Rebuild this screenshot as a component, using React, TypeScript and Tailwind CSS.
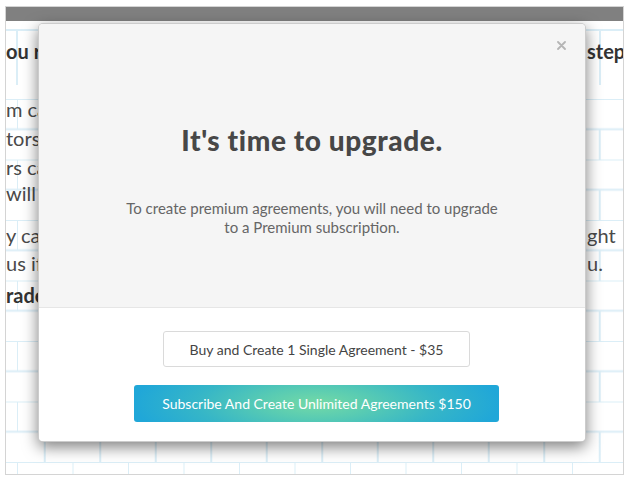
import React from "react";

const rows: { left: string; right?: string; bold?: boolean; mt: number }[] = [
  { left: "ou require", right: "step", bold: true, mt: 16 },
  { left: "m can be", mt: 30 },
  { left: "tors and", mt: 1 },
  { left: "rs can", mt: 1 },
  { left: "will be", mt: -2 },
  { left: "y can", right: "ght", mt: 14 },
  { left: "us if", right: "u.", mt: 0 },
  { left: "rade now", bold: true, mt: 4 },
];

function Grid() {
  return (
    <svg className="absolute inset-0 w-full h-full" xmlns="http://www.w3.org/2000/svg">
      <defs>
        <pattern id="brick" patternUnits="userSpaceOnUse" x="11" y="78" width="55.5" height="60.5">
          <line x1="0" y1="0" x2="55.5" y2="0" stroke="#dbeef7" strokeWidth="2" />
          <line x1="0" y1="30.25" x2="55.5" y2="30.25" stroke="#dbeef7" strokeWidth="2" />
          <line x1="0" y1="0" x2="0" y2="30.25" stroke="#dbeef7" strokeWidth="2" />
          <line x1="27.75" y1="30.25" x2="27.75" y2="60.5" stroke="#dbeef7" strokeWidth="2" />
        </pattern>
      </defs>
      <rect x="0" y="78" width="100%" height="100%" fill="url(#brick)" />
      <line x1="0" y1="9" x2="620" y2="9" stroke="#dbeef7" strokeWidth="2" />
      <line x1="11" y1="9" x2="11" y2="64" stroke="#dbeef7" strokeWidth="2" />
      <line x1="594" y1="9" x2="594" y2="64" stroke="#dbeef7" strokeWidth="2" />
    </svg>
  );
}

export default function App() {
  return (
    <div className="w-[629px] h-[480px] bg-white pl-[5px] pt-[6px] font-['Lato',sans-serif]">
      <div className="relative w-[619px] h-[469px] border border-[#d4d4d4] overflow-hidden bg-white">
        <div className="h-[14px] bg-[#808080]" />
        <div className="relative h-[453px]">
          <Grid />
          <div className="relative flex flex-col text-[20px] leading-[28px] text-[#4a4a4a]">
            {rows.map((r, i) => (
              <div
                key={i}
                className={`flex h-[28px] ${r.bold ? "font-bold text-[#333]" : ""}`}
                style={{ marginTop: r.mt }}
              >
                <span className="w-[581px] shrink-0 whitespace-nowrap overflow-hidden">{r.left}</span>
                {r.right && <span className="whitespace-nowrap">{r.right}</span>}
              </div>
            ))}
          </div>
        </div>

        <div className="absolute left-[32px] top-[16px] w-[548px] h-[419px] rounded-[5px] border border-[rgba(0,0,0,0.2)] bg-white shadow-[0_5px_15px_rgba(0,0,0,0.5)] overflow-hidden flex flex-col">
          <div className="relative h-[283px] bg-[#f5f5f5] flex flex-col items-center">
            <button className="absolute right-[19px] top-[16px] w-[10px] h-[10px] flex items-center justify-center">
              <svg width="9" height="9" viewBox="0 0 9 9">
                <path d="M1 1 L8 8 M8 1 L1 8" stroke="#b5b5b5" strokeWidth="1.8" strokeLinecap="round" />
              </svg>
            </button>
            <h1 className="mt-[99px] text-[28px] leading-[34px] font-black text-[#474747] tracking-[0.6px]">
              It's time to upgrade.
            </h1>
            <p className="mt-[42px] text-[15px] leading-[19px] text-[#666] text-center">
              To create premium agreements, you will need to upgrade
              <br />
              to a Premium subscription.
            </p>
          </div>
          <div className="flex-1 border-t border-[#e6e6e6] bg-white flex flex-col items-center pl-[9px]">
            <button className="mt-[23px] w-[307px] h-[36px] rounded-[3px] border border-[#dadada] bg-white text-[14px] text-[#444]">
              Buy and Create 1 Single Agreement - $35
            </button>
            <button className="mt-[18px] w-[365px] h-[37px] rounded-[3px] bg-[radial-gradient(50%_140%_at_50%_50%,#74daa6_0%,#58cbb3_30%,#36b6c7_65%,#20a7d8_100%)] text-[14px] text-white">
              Subscribe And Create Unlimited Agreements $150
            </button>
          </div>
        </div>
      </div>
    </div>
  );
}
